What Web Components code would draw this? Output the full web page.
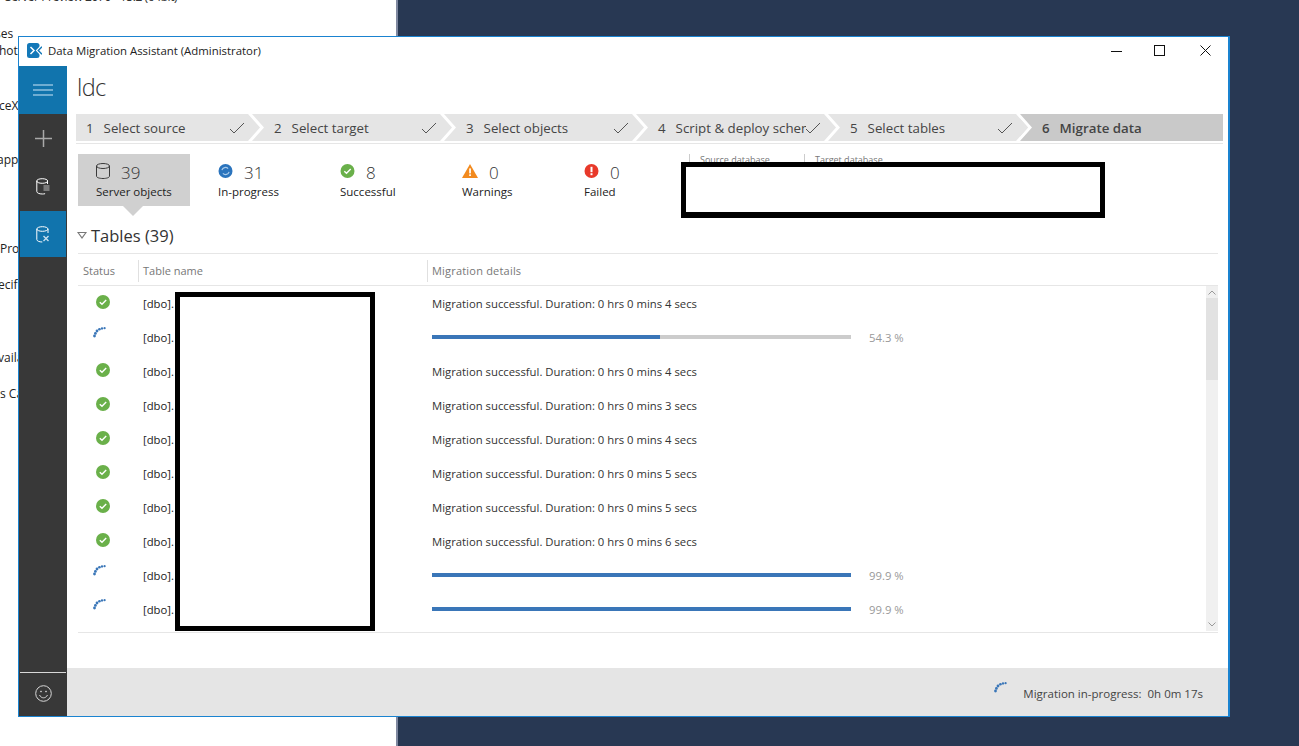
<!DOCTYPE html>
<html>
<head>
<meta charset="utf-8">
<style>
html, body { margin: 0; height: 100%; overflow: hidden; }
body { font-family: "Open Sans", "Liberation Sans", sans-serif; }
</style>
</head>
<body>
<desk-top>
  <dma-window>
    <nav-rail slot="rail"></nav-rail>
    <h-title slot="main">ldc</h-title>
    <step-bar slot="main">
      <wiz-step num="1" done>Select source</wiz-step>
      <wiz-step num="2" done>Select target</wiz-step>
      <wiz-step num="3" done>Select objects</wiz-step>
      <wiz-step num="4" done>Script &amp; deploy schema</wiz-step>
      <wiz-step num="5" done>Select tables</wiz-step>
      <wiz-step num="6" current>Migrate data</wiz-step>
    </step-bar>
    <stat-row slot="main"></stat-row>
    <tables-panel slot="main"></tables-panel>
    <status-foot slot="foot">Migration in-progress:&nbsp; 0h 0m 17s</status-foot>
  </dma-window>
</desk-top>

<script>
const icons = {
  ok: `<svg width="14" height="14" viewBox="0 0 14 14"><circle cx="7" cy="7" r="7" fill="#6ab04a"/><path d="M3.8 7.2l2.2 2.1 4.2-4.2" fill="none" stroke="#fff" stroke-width="1.4"/></svg>`,
  spin: `<svg width="14" height="12" viewBox="0 0 14 12" fill="#3a76b8"><circle cx="1.5" cy="10" r="1.4"/><circle cx="2.4" cy="7.4" r="1.4"/><circle cx="4" cy="5" r="1.4"/><circle cx="6.4" cy="3.2" r="1.3"/><circle cx="9" cy="2.4" r="1.2"/><circle cx="11.6" cy="2.2" r="1.1"/></svg>`,
  db: `<svg width="14" height="16" viewBox="0 0 14 16" fill="none" stroke="#3a3a3a"><path d="M.5 3v10.200c0 1.300 2.900 2.300 6.500 2.300s6.500-1 6.500-2.300V3"/><ellipse cx="7" cy="3" rx="6.500" ry="2.500"/></svg>`,
  sync: `<svg width="15" height="14" viewBox="0 0 14 14"><circle cx="7" cy="7" r="7" fill="#2b74bd"/><path d="M3.400 6.200a3.700 3.700 0 0 1 6.200-1.600M10.600 7.800a3.700 3.700 0 0 1-6.200 1.600" fill="none" stroke="#a9cbea" stroke-width="1.200"/></svg>`,
  warn: `<svg width="16" height="14" viewBox="0 0 16 14"><path d="M8 0l8 14H0z" fill="#f28a1e"/><rect x="7.200" y="4.400" width="1.700" height="5" fill="#fff"/><rect x="7.200" y="10.300" width="1.700" height="1.700" fill="#fff"/></svg>`,
  fail: `<svg width="15" height="14" viewBox="0 0 14 14"><circle cx="7" cy="7" r="7" fill="#e8392a"/><rect x="6" y="2.800" width="2" height="5.400" fill="#fff"/><rect x="6" y="9.200" width="2" height="2" fill="#fff"/></svg>`,
};

// desktop behind the app: second window on the left, navy wallpaper on the right
class DeskTop extends HTMLElement {
  constructor() {
    super();
    this.attachShadow({ mode: 'open' }).innerHTML = `
      <style>
        :host { display: block; position: relative; width: 1299px; height: 746px; overflow: hidden; background: #283853; }
        .back { position: absolute; left: 0; top: 0; width: 396px; height: 746px; background: #fff; border-right: 2px solid #7f88a0; font: 12px "Open Sans", sans-serif; color: #222; }
        .back span { position: absolute; white-space: nowrap; }
        .back .top { left: 5px; top: -12px; letter-spacing: -.4px; color: #333; }
        .app { position: absolute; left: 18px; top: 36px; }
      </style>
      <div class="back">
        <span class="top">Server Preview 2070 - 15.2 (64bit)</span>
        <span style="top:25px;left:-5px">ses</span>
        <span style="top:42px;left:-1px">hot</span>
        <span style="top:97px;left:-1px">ceX</span>
        <span style="top:151px;left:-3px">app</span>
        <span style="top:240px;left:0">Prov</span>
        <span style="top:276px;left:-2px">ecif</span>
        <span style="top:349px;left:-2px">vaila</span>
        <span style="top:385px;left:0">s Ca</span>
      </div>
      <div class="app"><slot></slot></div>`;
  }
}

class DmaWindow extends HTMLElement {
  constructor() {
    super();
    this.attachShadow({ mode: 'open' }).innerHTML = `
      <style>
        :host { display: flex; flex-direction: column; width: 1212px; height: 681px; box-sizing: border-box; background: #fff; border: 1px solid #1a83d0; border-right-width: 2px; color: #333; }
        .bar { display: flex; align-items: center; height: 29px; box-sizing: border-box; padding-bottom: 2px; flex: none; font-size: 11.4px; color: #222; }
        .logo { margin: 0 6px 0 8px; display: block; }
        .title { flex: 1; }
        .ctl { width: 46px; display: flex; justify-content: center; }
        .ctl.min { width: 40px; }
        .body { flex: 1; display: flex; min-height: 0; }
        .right { flex: 1; display: flex; flex-direction: column; min-width: 0; }
        .main { flex: 1; min-height: 0; padding-left: 9px; display: flex; flex-direction: column; }
        .foot { height: 48px; flex: none; }
      </style>
      <div class="bar">
        <svg class="logo" width="15" height="15" viewBox="0 0 15 15">
          <rect width="12.500" height="15" rx="2.500" fill="#1378b8"/>
          <path d="M3.500 4l3.500 3.500L3.500 11" fill="none" stroke="#fff" stroke-width="1.500"/>
          <path d="M15 3.500l-4 4 4 4" fill="none" stroke="#fff" stroke-width="3.200"/>
          <path d="M15 3.800L11.300 7.500 15 11.200" fill="none" stroke="#1378b8" stroke-width="1.500"/>
        </svg>
        <div class="title">Data Migration Assistant (Administrator)</div>
        <div class="ctl min"><svg width="11" height="10"><path d="M0 5.500h11" stroke="#111"/></svg></div>
        <div class="ctl"><svg width="11" height="11"><rect x=".5" y=".5" width="10" height="10" fill="none" stroke="#111"/></svg></div>
        <div class="ctl"><svg width="11" height="11"><path d="M.5.500l10 10M10.500.500l-10 10" stroke="#111" fill="none"/></svg></div>
      </div>
      <div class="body">
        <slot name="rail"></slot>
        <div class="right">
          <div class="main"><slot name="main"></slot></div>
          <div class="foot"><slot name="foot"></slot></div>
        </div>
      </div>`;
  }
}

class NavRail extends HTMLElement {
  constructor() {
    super();
    this.attachShadow({ mode: 'open' }).innerHTML = `
      <style>
        :host { display: flex; flex-direction: column; width: 48px; flex: none; background: #383838; }
        .it { height: 48px; display: flex; align-items: center; justify-content: center; flex: none; }
        .blue { background: #1174ad; }
        .sel { background: #1174ad; margin: 1px 1px 0; height: 46px; }
        .gap { flex: 1; }
        .sep { height: 1px; background: #d8d8d8; margin: 0 1px; }
        .smile { height: 43px; box-sizing: border-box; padding-bottom: 3px; display: flex; align-items: center; justify-content: center; }
      </style>
      <div class="it blue"><svg width="20" height="12"><path d="M0 1h20M0 6h20M0 11h20" stroke="#8ec0de" stroke-width="1.600"/></svg></div>
      <div class="it"><svg width="17" height="17"><path d="M8.500 0v17M0 8.500h17" stroke="#a9a9a9" stroke-width="1.500"/></svg></div>
      <div class="it"><svg width="14" height="17" viewBox="0 0 14 17" fill="none" stroke="#fff"><path d="M.8 3v10.500c0 1.500 2.500 2.500 5.500 2.500 1 0 2-.1 2.800-.3M11.500 3v3"/><ellipse cx="6.200" cy="3" rx="5.500" ry="2.300"/><path d="M7.500 8h6M7.500 10h6M7.500 12h6" stroke="#bbb" stroke-width="1.200"/></svg></div>
      <div class="it sel"><svg width="14" height="17" viewBox="0 0 14 17" fill="none" stroke="#fff"><path d="M.8 3v10.500c0 1.500 2.500 2.500 5.500 2.500M12 3v4"/><ellipse cx="6.400" cy="3" rx="5.600" ry="2.300"/><path d="M7.500 10l5 5M12.500 10l-5 5" stroke="#c9e0ef" stroke-width="1.400"/></svg></div>
      <div class="gap"></div>
      <div class="sep"></div>
      <div class="smile"><svg width="17" height="17" viewBox="0 0 17 17" fill="none" stroke="#d8d8d8"><circle cx="8.500" cy="8.500" r="7.800"/><path d="M4.500 10c1 2 2.500 2.800 4 2.800s3-.8 4-2.800"/><circle cx="6" cy="6.500" r=".5"/><circle cx="11" cy="6.500" r=".5"/></svg></div>`;
  }
}

class HTitle extends HTMLElement {
  constructor() {
    super();
    this.attachShadow({ mode: 'open' }).innerHTML = `
      <style>
        :host { display: flex; align-items: center; height: 48px; box-sizing: border-box; padding-bottom: 6px; font-size: 23.5px; font-weight: 300; letter-spacing: -.6px; color: #333; margin-left: 1px; flex: none; }
      </style><slot></slot>`;
  }
}

class StepBar extends HTMLElement {
  constructor() {
    super();
    this.attachShadow({ mode: 'open' }).innerHTML = `
      <style>
        :host { display: flex; height: 27px; width: 1147px; flex: none; padding-bottom: 2px; border-bottom: 1px solid #e6e6e6; }
      </style><slot></slot>`;
  }
}

class WizStep extends HTMLElement {
  constructor() {
    super();
    const cur = this.hasAttribute('current');
    const first = this.getAttribute('num') === '1';
    const own = cur ? '#c9c9c9' : '#e5e5e5';
    const basis = cur ? 203 : first ? 176 : 192;
    this.attachShadow({ mode: 'open' }).innerHTML = `
      <style>
        :host { display: block; position: relative; flex: 0 0 ${basis}px; height: 27px; background: ${own}; font-size: 13.3px; color: #444; ${cur ? 'font-weight: 600;' : ''} }
        .row { display: flex; align-items: center; height: 100%; padding-left: ${first ? 10 : 22}px; gap: 10px; white-space: nowrap; overflow: hidden; width: 170px; box-sizing: border-box; }
        .check { position: absolute; right: 7px; top: 8px; z-index: 2; }
        .chev { position: absolute; right: -12px; top: 0; z-index: 1; }
      </style>
      <div class="row"><span>${this.getAttribute('num')}</span><span><slot></slot></span></div>
      ${this.hasAttribute('done') ? `<svg class="check" width="16" height="12"><path d="M1 7l4 4L15 1" fill="none" stroke="#555"/></svg>
      <svg class="chev" width="16" height="27"><path d="M0 0l12 13.500L0 27z" fill="${own}"/><path d="M0 0h4l12 13.500L4 27H0l12-13.500z" fill="#fff"/></svg>` : ''}`;
  }
}

class StatTile extends HTMLElement {
  constructor() {
    super();
    const sel = this.hasAttribute('selected');
    this.attachShadow({ mode: 'open' }).innerHTML = `
      <style>
        :host { display: block; position: relative; height: 52px; box-sizing: border-box; padding-top: 7px; font-size: 11.5px; color: #222; flex: none; ${sel ? 'background: #d0d0d0;' : ''} }
        .top { display: flex; align-items: center; gap: 11px; height: 22px; font-size: 17px; font-weight: 300; color: #333; }
        .lab { white-space: nowrap; margin-top: 1px; }
        .tip { position: absolute; left: 45px; top: 52px; border: 10px solid transparent; border-top-color: #d0d0d0; border-bottom: 0; }
      </style>
      <div class="top"><slot name="icon"></slot><span>${this.getAttribute('n')}</span></div>
      <div class="lab">${this.getAttribute('label')}</div>
      ${sel ? '<div class="tip"></div>' : ''}`;
  }
}

class StatRow extends HTMLElement {
  constructor() {
    super();
    const tile = (n, label, ic, w, extra = '') =>
      `<stat-tile n="${n}" label="${label}" style="width:${w}px" ${extra}><span slot="icon" style="display:flex;margin-top:-3px">${ic}</span></stat-tile>`;
    const okBig = icons.ok.replace('width="14"', 'width="15"');
    this.attachShadow({ mode: 'open' }).innerHTML = `
      <style>
        :host { display: block; position: relative; height: 73px; flex: none; }
        .row { display: flex; padding: 10px 0 0 2px; height: 52px; }
        .mask { position: absolute; left: 605px; top: 18px; width: 424px; height: 56px; box-sizing: border-box; border: 5px solid #000; background: #fff; border-bottom-width: 6px; }
        .db { position: absolute; top: 10px; font-size: 9px; color: #777; border-left: 1px solid #ccc; padding-left: 10px; height: 18px; line-height: 12px; }
        stat-tile:first-child { padding-left: 18px; }
      </style>
      <div class="row">
        ${tile(39, 'Server objects', icons.db, 112, 'selected')}
        <span style="width:28px"></span>
        ${tile(31, 'In-progress', icons.sync, 122)}
        ${tile(8, 'Successful', okBig, 122)}
        ${tile(0, 'Warnings', icons.warn, 122)}
        ${tile(0, 'Failed', icons.fail, 80)}
      </div>
      <div class="db" style="left:613px">Source database</div>
      <div class="db" style="left:728px">Target database</div>
      <div class="mask"></div>`;
  }
}

class TablesPanel extends HTMLElement {
  constructor() {
    super();
    const ok = (sec) => ({ sec });
    const rows = [ok(4), { pct: 54.3 }, ok(4), ok(3), ok(4), ok(5), ok(5), ok(6), { pct: 99.9 }, { pct: 99.9 }];
    const html = rows.map((r) => `
      <div class="tr">
        <div class="st ${r.pct ? 'sp' : ''}">${r.pct ? icons.spin : icons.ok}</div>
        <div class="nm">[dbo].</div>
        ${r.pct
          ? `<div class="prog"><div class="track"><div class="fill" style="width:${r.pct}%"></div></div><span class="pct">${r.pct} %</span></div>`
          : `<div class="msg">Migration successful. Duration: 0 hrs 0 mins ${r.sec} secs</div>`}
      </div>`).join('');
    this.attachShadow({ mode: 'open' }).innerHTML = `
      <style>
        :host { display: block; position: relative; width: 1140px; margin-left: 2px; flex: none; font-size: 11.3px; color: #333; }
        .head { display: flex; align-items: center; height: 36px; font-size: 16.5px; font-weight: 400; color: #333; }
        .tri { width: 0; height: 0; margin-right: 4px; position: relative; border: 5px solid transparent; border-top: 7px solid #777; border-bottom: 0; margin-left: -1px; }
        .tri::after { content: ""; position: absolute; left: -3px; top: -6px; border: 3px solid transparent; border-top: 4px solid #fff; border-bottom: 0; }
        .cols { display: flex; height: 33px; box-sizing: border-box; padding-top: 2px; align-items: center; border-top: 1px solid #e6e6e6; border-bottom: 1px solid #e6e6e6; color: #777; font-size: 11px; }
        .cols div { height: 22px; line-height: 22px; padding-left: 4px; box-sizing: border-box; }
        .cols .c2, .cols .c3 { border-left: 1px solid #e0e0e0; }
        .cols .c3 { letter-spacing: .2px; }
        .c1 { width: 60px; padding-left: 5px !important; }
        .c2 { width: 289px; }
        .list { position: relative; height: 346px; border-bottom: 1px solid #e6e6e6; overflow: hidden; }
        .tr { display: flex; height: 34px; align-items: center; }
        .st { width: 65px; padding-left: 18px; box-sizing: border-box; display: flex; margin-top: -3px; }
        .st.sp { padding-left: 15px; margin-top: -11px; }
        .nm { width: 289px; color: #222; white-space: nowrap; }
        .msg { color: #333; }
        .prog { display: flex; align-items: center; gap: 18px; color: #999; }
        .pct { margin-top: 1px; }
        .track { width: 419px; height: 4px; background: #ccc; }
        .fill { height: 100%; background: #3a76b8; }
        .sb { position: absolute; right: 0; top: 0; width: 12px; height: 345px; background: #f0f0f0; display: flex; flex-direction: column; align-items: center; justify-content: space-between; }
        .thumb { position: absolute; top: 12px; left: 0; width: 12px; height: 82px; background: #e2e2e2; }
        .mask { position: absolute; left: 97px; top: 6px; width: 200px; height: 339px; box-sizing: border-box; border: 5px solid #000; background: #fff; }
      </style>
      <div class="head"><span class="tri"></span>Tables (39)</div>
      <div class="cols"><div class="c1">Status</div><div class="c2">Table name</div><div class="c3">Migration details</div></div>
      <div class="list">
        ${html}
        <div class="sb">
          <svg width="8" height="5" style="margin-top:4px"><path d="M.5 4.500L4 1l3.500 3.500" fill="none" stroke="#999"/></svg>
          <svg width="8" height="5" style="margin-bottom:4px"><path d="M.5.500L4 4 7.500.5" fill="none" stroke="#999"/></svg>
          <div class="thumb"></div>
        </div>
        <div class="mask"></div>
      </div>`;
  }
}

class StatusFoot extends HTMLElement {
  constructor() {
    super();
    this.attachShadow({ mode: 'open' }).innerHTML = `
      <style>
        :host { display: flex; align-items: center; justify-content: flex-end; height: 48px; background: #e5e5e5; padding: 2px 25px 0 0; box-sizing: border-box; gap: 15px; font-size: 11.5px; color: #444; }
        .sp { margin-top: -12px; display: flex; }
      </style>
      <span class="sp">${icons.spin}</span><span><slot></slot></span>`;
  }
}

customElements.define('desk-top', DeskTop);
customElements.define('dma-window', DmaWindow);
customElements.define('nav-rail', NavRail);
customElements.define('h-title', HTitle);
customElements.define('step-bar', StepBar);
customElements.define('wiz-step', WizStep);
customElements.define('stat-tile', StatTile);
customElements.define('stat-row', StatRow);
customElements.define('tables-panel', TablesPanel);
customElements.define('status-foot', StatusFoot);
</script>
</body>
</html>
